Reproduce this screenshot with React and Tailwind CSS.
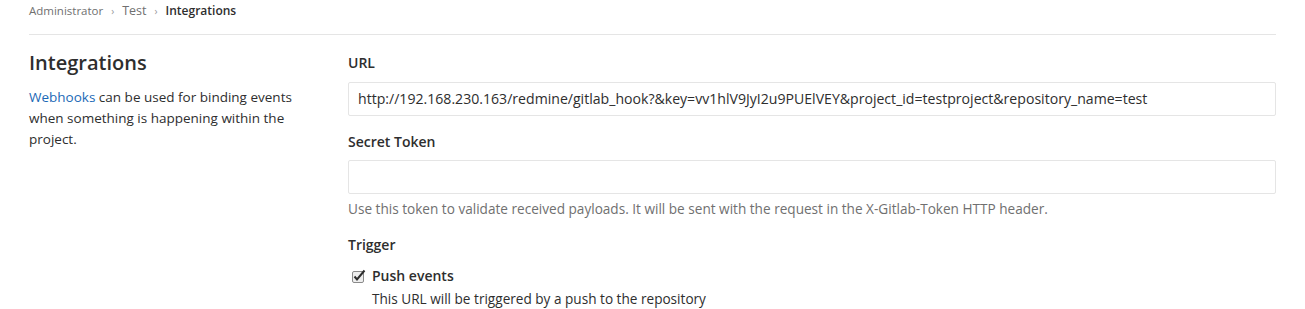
import React from "react";

export default function App() {
  return (
    <div className="min-h-[309px] bg-white px-[29px] text-[#2e2e2e]" style={{ fontFamily: '"Open Sans", "Noto Sans", sans-serif' }}>
      <div className="flex h-[34px] items-start pt-[3px] text-[11.5px] leading-[16px]">
        <span className="text-[#707070]">Administrator</span>
        <span className="mx-[8px] text-[#999] text-[10px]">›</span>
        <span className="text-[12.5px] text-[#707070]">Test</span>
        <span className="mx-[8px] text-[#999] text-[10px]">›</span>
        <span className="text-[12px] font-semibold text-[#2e2e2e]">Integrations</span>
      </div>
      <div className="border-t border-[#e5e5e5]" />
      <div className="grid grid-cols-[290px_1fr] gap-[29px] pt-[14px]">
        <div>
          <h4 className="mb-[10px] text-[20px] font-semibold leading-[28px] text-[#2e2e2e]">Integrations</h4>
          <p className="text-[13.5px] leading-[21px] text-[#2e2e2e]">
            <a className="text-[#1b69b6]">Webhooks</a> can be used for binding events when something is happening within the project.
          </p>
        </div>
        <div>
          <label className="block text-[14px] font-semibold leading-[28px]">URL</label>
          <div className="mt-[5px] flex h-[34px] items-center rounded-[2px] border border-[#e5e5e5] px-[9px] text-[14.1px] text-[#2e2e2e]">
            http://192.168.230.163/redmine/gitlab_hook?&amp;key=vv1hlV9JyI2u9PUElVEY&amp;project_id=testproject&amp;repository_name=test
          </div>
          <label className="mt-[12px] block text-[14px] font-semibold leading-[28px]">Secret Token</label>
          <div className="mt-[4px] h-[34px] rounded-[2px] border border-[#e5e5e5]" />
          <p className="mt-[6px] text-[13.6px] leading-[18px] text-[#707070]">
            Use this token to validate received payloads. It will be sent with the request in the X-Gitlab-Token HTTP header.
          </p>
          <label className="mt-[13px] block text-[14px] font-semibold leading-[28px]">Trigger</label>
          <div className="mt-[7px] flex items-center pl-[4px]">
            <svg width="14" height="14" viewBox="0 0 14 14" className="mr-[6px]">
              <rect x="0.5" y="2.5" width="11" height="11" rx="1.5" fill="#eeeeee" stroke="#8a8a8a" />
              <path d="M2.5 7.5 L5 10.5 L12.5 1.5" fill="none" stroke="#2e2e2e" strokeWidth="2" />
            </svg>
            <span className="text-[14px] font-semibold leading-[20px]">Push events</span>
          </div>
          <p className="mt-[3px] pl-[24px] text-[13.6px] leading-[20px] text-[#2e2e2e]">This URL will be triggered by a push to the repository</p>
        </div>
      </div>
    </div>
  );
}
